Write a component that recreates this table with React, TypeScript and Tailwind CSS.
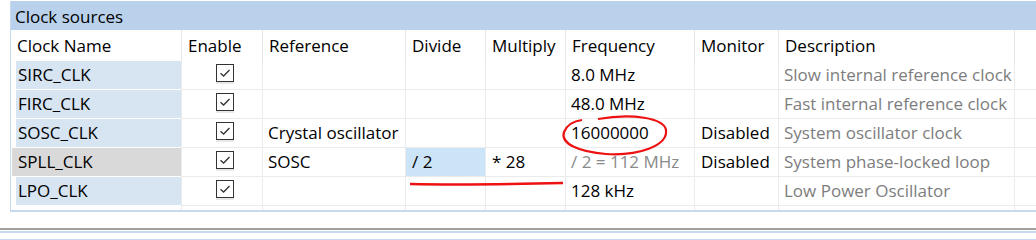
import React from "react";

const cols = [
  "w-[171px]",
  "w-[81px]",
  "w-[143px]",
  "w-[80px]",
  "w-[80px]",
  "w-[129px]",
  "w-[84px]",
  "w-[236px]",
  "flex-1",
];

function Check() {
  return (
    <div className="flex flex-col items-center">
      <div className="w-[18px] h-[18px] border border-[#333333] bg-white flex items-center justify-center">
        <svg width="12" height="10" viewBox="0 0 12 10">
          <path d="M1.5 5.2 L4.6 8 L10.5 2" fill="none" stroke="#333" strokeWidth="1.3" />
        </svg>
      </div>
      <div className="w-[18px] h-[2px] bg-[#e8e8e8]" />
    </div>
  );
}

type Row = {
  name: string;
  ref: string;
  div: string;
  mul: string;
  freq: string;
  freqGray?: boolean;
  mon: string;
  desc: string;
  selected?: boolean;
};

const rows: Row[] = [
  { name: "SIRC_CLK", ref: "", div: "", mul: "", freq: "8.0 MHz", mon: "", desc: "Slow internal reference clock" },
  { name: "FIRC_CLK", ref: "", div: "", mul: "", freq: "48.0 MHz", mon: "", desc: "Fast internal reference clock" },
  { name: "SOSC_CLK", ref: "Crystal oscillator", div: "", mul: "", freq: "16000000", mon: "Disabled", desc: "System oscillator clock" },
  { name: "SPLL_CLK", ref: "SOSC", div: "/ 2", mul: "* 28", freq: "/ 2 = 112 MHz", freqGray: true, mon: "Disabled", desc: "System phase-locked loop", selected: true },
  { name: "LPO_CLK", ref: "", div: "", mul: "", freq: "128 kHz", mon: "", desc: "Low Power Oscillator" },
];

const headers = ["Clock Name", "Enable", "Reference", "Divide", "Multiply", "Frequency", "Monitor", "Description", ""];

export default function App() {
  return (
    <div
      className="relative w-[1036px] h-[240px] bg-white overflow-hidden text-[17px] text-black"
      style={{ fontFamily: '"Open Sans", "Noto Sans", sans-serif' }}
    >
      <div className="pt-px pl-[10px]">
        <div className="border-l border-b-2 border-[#c7d9ec]">
          <div className="h-[29px] bg-[#b9d1ea] pl-[4px] flex items-center leading-none pt-px">Clock sources</div>
          {/* header row */}
          <div className="flex h-[31px]">
            {headers.map((h, i) => (
              <div
                key={i}
                className={`${cols[i]} h-full flex items-center pl-[6px] whitespace-nowrap ${i < 8 ? "border-r border-[#e6e6e6]" : ""}`}
              >
                {h}
              </div>
            ))}
          </div>
          {rows.map((r, ri) => (
            <div key={ri} className="flex h-[29px]">
              <div className={`${cols[0]} h-full border-r border-[#ebebeb] flex`}>
                <div
                  className={`${r.selected ? "ml-px bg-[#d9d9d9] pl-[6px]" : "ml-[5px] bg-[#d7e4f2] pl-[2px]"} flex-1 h-[28px] flex items-center`}
                >
                  {r.name}
                </div>
              </div>
              <div className={`${cols[1]} h-full border-r border-b border-[#ebebeb] flex items-start justify-center pt-[3px] pl-[5px]`}>
                <Check />
              </div>
              <div className={`${cols[2]} h-full border-r border-b border-[#ebebeb] flex items-center pl-[5px] whitespace-nowrap`}>{r.ref}</div>
              <div
                className={`${cols[3]} h-full border-r border-b border-[#ebebeb] flex items-center pl-[6px] ${r.selected ? "bg-[#cce4f7]" : ""}`}
              >
                {r.div}
              </div>
              <div className={`${cols[4]} h-full border-r border-b border-[#ebebeb] flex items-center pl-[6px]`}>{r.mul}</div>
              <div
                className={`${cols[5]} h-full border-r border-b border-[#ebebeb] flex items-center pl-[5px] whitespace-nowrap ${r.freqGray ? "text-[#8a8a8a]" : ""}`}
              >
                {r.freq}
              </div>
              <div className={`${cols[6]} h-full border-r border-b border-[#ebebeb] flex items-center pl-[6px]`}>{r.mon}</div>
              <div className={`${cols[7]} h-full border-r border-b border-[#ebebeb] flex items-center pl-[5px] text-[#7d7d7d] whitespace-nowrap overflow-hidden`}>
                {r.desc}
              </div>
              <div className={`${cols[8]} h-full border-b border-[#ebebeb]`} />
            </div>
          ))}
          <div className="flex h-[4px]">
            {cols.map((c, i) => (
              <div key={i} className={`${c} h-full ${i < 8 ? "border-r border-[#ebebeb]" : ""}`} />
            ))}
          </div>
        </div>
      </div>
      <div className="mt-[16px] border-t-2 border-[#a0a0a0]" />
      <div className="mt-px border-t-2 border-[#c7d9ec]" />
      <div className="mt-[6px] border-t-2 border-[#c7d9ec]" />

      {/* red annotations */}
      <svg className="absolute left-0 top-0 pointer-events-none" width="1036" height="240">
        <path
          d="M598 119 C632 113 664 118 666 130 C668 146 638 156 606 154 C580 152 560 144 564 132 C567 125 574 121 582 120"
          fill="none"
          stroke="#ee1111"
          strokeWidth="2.2"
        />
        <path d="M410 184 C460 185 520 184 563 183" fill="none" stroke="#ee1111" strokeWidth="2.5" />
      </svg>
    </div>
  );
}
